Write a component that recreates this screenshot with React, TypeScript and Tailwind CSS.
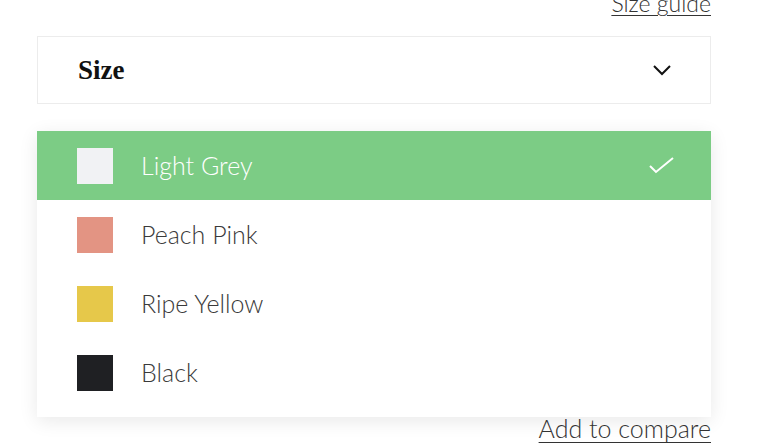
const options = [
  { name: "Light Grey", color: "bg-[#f1f2f4]", selected: true },
  { name: "Peach Pink", color: "bg-[#e39483]", selected: false },
  { name: "Ripe Yellow", color: "bg-[#e6c84a]", selected: false },
  { name: "Black", color: "bg-[#1f2023]", selected: false },
];

export default function App() {
  return (
    <div className="w-[764px] h-[448px] overflow-hidden bg-white font-['Lato',sans-serif]">
      <div className="ml-[37px] w-[674px] flex flex-col">
        <div className="flex justify-end -mt-[10px] h-[28px]">
          <a className="text-[23px] font-light leading-[26px] text-[#333] underline underline-offset-[3px] decoration-1">
            Size guide
          </a>
        </div>

        <div className="mt-[18px] h-[68px] border border-[#ececec] flex items-center justify-between pl-[40px] pr-[38px]">
          <span className="font-['Liberation_Serif',serif] font-bold text-[27px] text-[#111]">Size</span>
          <svg width="20" height="12" viewBox="0 0 20 12" fill="none" stroke="#111" strokeWidth="2">
            <polyline points="2,2 10,10 18,2" />
          </svg>
        </div>

        <ul className="mt-[27px] pb-[10px] bg-white shadow-[0_4px_18px_rgba(0,0,0,0.09)]">
          {options.map((o) => (
            <li
              key={o.name}
              className={
                "h-[69px] flex items-center pl-[40px] pr-[36px] " +
                (o.selected ? "bg-[#7ccc85] text-white" : "text-[#3a3a3a]")
              }
            >
              <span className={"w-[36px] h-[36px] shrink-0 " + o.color} />
              <span className="ml-[28px] text-[25px] font-light flex-1">{o.name}</span>
              {o.selected && (
                <svg width="26" height="18" viewBox="0 0 26 18" fill="none" stroke="white" strokeWidth="2">
                  <polyline points="1,9 7,15 24,1" />
                </svg>
              )}
            </li>
          ))}
        </ul>

        <div className="flex justify-end -mt-[3px]">
          <a className="text-[25px] font-light leading-[28px] text-[#333] underline underline-offset-[4px] decoration-1">
            Add to compare
          </a>
        </div>
      </div>
    </div>
  );
}
